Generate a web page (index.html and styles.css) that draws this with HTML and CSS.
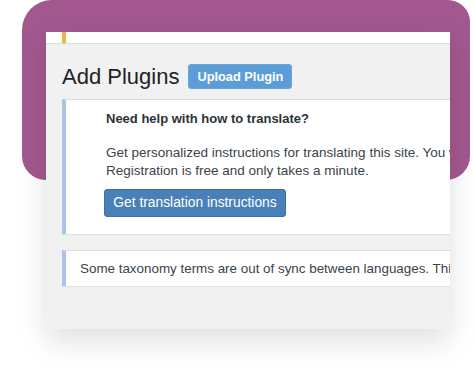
FILE: index.html
```html
<!DOCTYPE html>
<html lang="en">
<head>
  <meta charset="UTF-8" />
  <title>Add Plugins</title>
  <link rel="stylesheet" href="styles.css">
</head>
<body>

<div class="stage">
  <!-- purple backdrop behind the screenshot card -->
  <div class="blob"></div>

  <div class="card">
    <div class="topbar"><span class="mark"></span></div>

    <div class="page-head">
      <h1>Add Plugins</h1>
      <a class="upload-btn">Upload Plugin</a>
    </div>

    <div class="notice notice-help">
      <p class="notice-title">Need help with how to translate?</p>
      <p class="notice-text">Get personalized instructions for translating this site. You will need to register.<br>Registration is free and only takes a minute.</p>
      <a class="primary-btn">Get translation instructions</a>
    </div>

    <div class="notice notice-sync">
      <p>Some taxonomy terms are out of sync between languages. This may cause problems.</p>
    </div>
  </div>
</div>

</body>
</html>
```

FILE: styles.css
```css
body {
  margin: 0;
  background: #fff;
  font-family: "Liberation Sans", Arial, sans-serif;
}
.stage {
  position: relative;
  width: 474px;
  height: 373px;
  overflow: hidden;
  padding-top: 32px;
  box-sizing: border-box;
}
.blob {
  position: absolute;
  top: 0;
  left: 22px;
  width: 448px;
  height: 180px;
  background: #a2588f;
  border-radius: 30px 22px 24px 24px;
  z-index: 0;
}
.card {
  position: relative;
  z-index: 1;
  margin-left: 46px;
  width: 404px;
  height: 297px;
  background: #f1f1f1;
  overflow: hidden;
  box-shadow: 0 12px 28px rgba(0, 0, 0, 0.13);
}
.topbar {
  height: 11px;
  background: #fff;
  border-bottom: 1px solid #dcdcde;
  padding-left: 16px;
}
.mark {
  display: block;
  width: 4px;
  height: 11px;
  background: #e9b648;
}
.page-head {
  display: flex;
  align-items: center;
  gap: 9px;
  height: 25px;
  margin: 20px 0 10px 16px;
}
h1 {
  margin: 0;
  font-size: 22px;
  font-weight: 400;
  color: #1d2327;
  white-space: nowrap;
}
.upload-btn {
  display: block;
  flex: none;
  height: 25px;
  line-height: 23px;
  background: #5b9dd6;
  border: 1px solid #6aa6da;
  border-radius: 3px;
  color: #fff;
  font-size: 12.8px;
  font-weight: 700;
  box-sizing: border-box;
  width: 104px;
  text-align: center;
  white-space: nowrap;
}
.notice {
  margin-left: 16px;
  width: 440px;
  background: #fff;
  border-top: 1px solid #dcdcde;
  border-left: 4px solid #a9c5e8;
  box-shadow: 0 1px 1px rgba(0, 0, 0, 0.06);
  color: #3c434a;
  white-space: nowrap;
}
.notice p {
  margin: 0;
}
.notice-help {
  padding: 11px 0 17px 40px;
}
.notice-title {
  font-size: 13px;
  font-weight: 700;
  line-height: 16px;
  color: #2c3338;
}
.notice-text {
  margin-top: 17px !important;
  font-size: 13.5px;
  line-height: 18px;
}
.primary-btn {
  display: inline-block;
  margin-top: 9px;
  margin-left: -2px;
  width: 182px;
  height: 28px;
  line-height: 26px;
  box-sizing: border-box;
  text-align: center;
  background: #4a80b8;
  border: 1px solid #3d6fa3;
  border-radius: 3px;
  color: #fff;
  font-size: 13.8px;
}
.notice-sync {
  margin-top: 16px;
  height: 36px;
  box-sizing: border-box;
  padding-left: 14px;
  font-size: 13.4px;
  line-height: 36px;
}
```
